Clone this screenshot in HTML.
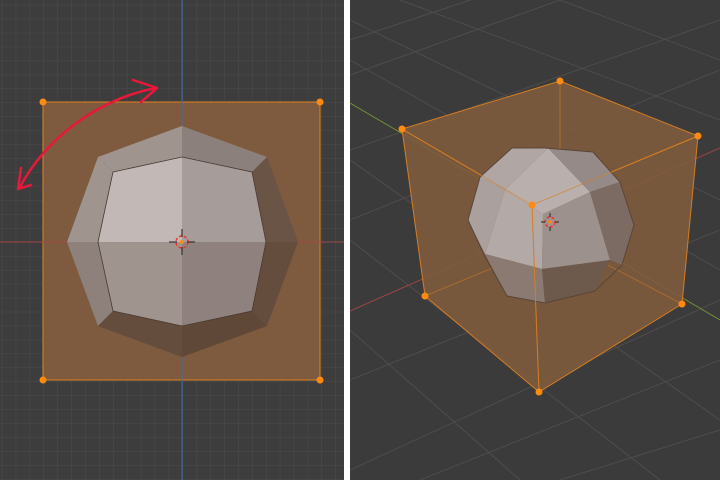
<!DOCTYPE html>
<html><head><meta charset="utf-8"><style>html,body{margin:0;padding:0;background:#fff;width:720px;height:480px;overflow:hidden}</style></head>
<body>
<svg width="720" height="480" viewBox="0 0 720 480" xmlns="http://www.w3.org/2000/svg">
<defs>
<pattern id="g1" width="13.9" height="13.95" patternUnits="userSpaceOnUse" x="43.5" y="102.5">
<path d="M0 0V13.95M0 0H13.9" stroke="#4b4b4b" stroke-width="1" fill="none"/>
</pattern>
<clipPath id="cl"><rect x="0" y="0" width="344" height="480"/></clipPath>
<clipPath id="cr"><rect x="350" y="0" width="370" height="480"/></clipPath>
</defs>
<!-- LEFT PANEL -->
<g clip-path="url(#cl)">
<rect x="0" y="0" width="344" height="480" fill="#3d3d3d"/>
<rect x="0" y="0" width="344" height="480" fill="url(#g1)"/>
<rect x="43" y="102" width="277" height="278" fill="#7e5b3e" stroke="#e0821e" stroke-width="1"/>
<line x1="182" y1="0" x2="182" y2="480" stroke="#3d6bb0" stroke-width="1"/>
<line x1="0" y1="242" x2="344" y2="242" stroke="#a04848" stroke-width="1"/>
<polygon points="182,126 182,157 113,172 98,157" fill="#a0948f"/>
<polygon points="182,126 267,157 252,172 182,157" fill="#8c807c"/>
<polygon points="98,157 113,172 98,242 67,242" fill="#a0948f"/>
<polygon points="67,242 98,242 113,311 98,326" fill="#8e807b"/>
<polygon points="267,157 298,242 266,242 252,172" fill="#6a5446"/>
<polygon points="298,242 267,326 252,311 266,242" fill="#654d3e"/>
<polygon points="98,326 113,311 182,326 182,357" fill="#654d3d"/>
<polygon points="182,357 182,326 252,311 267,326" fill="#5f4838"/>
<polygon points="182,157 182,242 98,242 113,172" fill="#c2b8b5"/>
<polygon points="182,157 252,172 266,242 182,242" fill="#a69c99"/>
<polygon points="98,242 182,242 182,326 113,311" fill="#a0948f"/>
<polygon points="182,242 266,242 252,311 182,326" fill="#8f827e"/>
<polygon points="182,157 252,172 266,242 252,311 182,326 113,311 98,242 113,172" fill="none" stroke="#4a3a30" stroke-width="0.8"/>
<circle cx="43" cy="102" r="3.5" fill="#ff8a10"/><circle cx="320" cy="102" r="3.5" fill="#ff8a10"/>
<circle cx="43" cy="380" r="3.5" fill="#ff8a10"/><circle cx="320" cy="380" r="3.5" fill="#ff8a10"/>
<circle cx="182" cy="242" r="6" fill="none" stroke="#e33" stroke-width="1.5" stroke-dasharray="3 2"/>
<path d="M169 242h8M187 242h8M182 229v8M182 247v8" stroke="#222" stroke-width="1"/>
<circle cx="182" cy="242" r="2" fill="#ff8a10"/>
<path d="M20 187 C45 140 95 100 156 88" stroke="#e8183a" stroke-width="2.5" fill="none" stroke-linecap="round"/>
<path d="M133 80 L157 88 L141 102" stroke="#e8183a" stroke-width="2.5" fill="none" stroke-linecap="round" stroke-linejoin="round"/>
<path d="M21 168 L18 189 L31 185" stroke="#e8183a" stroke-width="2.5" fill="none" stroke-linecap="round" stroke-linejoin="round"/>
</g>
<!-- RIGHT PANEL -->
<g clip-path="url(#cr)">
<rect x="350" y="0" width="370" height="480" fill="#3b3b3b"/>
<g stroke="#4d4d4d" stroke-width="1" fill="none">
<path d="M350 40L470 0M350 75L560 0M350 150L720 20M350 220L720 70M350 380L720 230M350 470L720 300M420 480L720 360M560 480L720 430"/>
<path d="M400 0L720 120M350 20L720 200M350 60L720 270M350 160L720 420M350 240L660 480M350 330L520 480M560 0L720 60"/>
</g>
<line x1="350" y1="311" x2="720" y2="148" stroke="#9a4545" stroke-width="1"/>
<line x1="350" y1="103" x2="720" y2="320" stroke="#6f8f3a" stroke-width="1"/>
<polygon points="402,129 560,81 698,136 682,304 539,392 425,296" fill="#7e5b3e" fill-opacity="0.92"/>
<g stroke="#d57d22" stroke-width="1" fill="none">
<path d="M402,129 L560,81 L698,136 L532,205 Z"/>
<path d="M402,129 L425,296 L539,392 L682,304 L698,136"/>
<path d="M560,81 L560,160 M425,296 L560,240 L682,304" stroke-opacity="0.5"/>
</g>
<polygon points="480,177 512,148 548,148 505,190" fill="#b0a6a3"/>
<polygon points="548,148 590,192 543,214 505,190" fill="#b9b0ad"/>
<polygon points="548,148 593,152 620,182 590,192" fill="#958a87"/>
<polygon points="480,177 505,190 485,254 468,220" fill="#aaa09d"/>
<polygon points="505,190 543,214 542,269 485,254" fill="#b3a9a6"/>
<polygon points="543,214 590,192 610,260 542,269" fill="#9d918d"/>
<polygon points="590,192 620,182 634,225 622,265 610,260" fill="#7c6b62"/>
<polygon points="485,254 542,269 545,303 507,296" fill="#8a7a72"/>
<polygon points="542,269 610,260 595,291 545,303" fill="#6e5a4d"/>
<polygon points="512,148 545,148 593,152 620,182 634,225 622,265 595,291 545,303 507,296 484,255 468,220 480,177" fill="none" stroke="#5a4538" stroke-width="1"/>
<path d="M532,205 L698,136 M532,205 L402,129" stroke="#d57d22" stroke-width="1" stroke-opacity="0.6"/>
<path d="M532,205 L539,392" stroke="#d57d22" stroke-width="1"/>
<circle cx="550" cy="222" r="5" fill="none" stroke="#e33" stroke-width="1.5" stroke-dasharray="3 2"/>
<path d="M541 222h4M555 222h4M550 213v4M550 227v4" stroke="#222" stroke-width="1"/>
<circle cx="550" cy="222" r="1.8" fill="#ff8a10"/>
<g fill="#ff8a10">
<circle cx="560" cy="81" r="3.5"/><circle cx="402" cy="129" r="3.5"/><circle cx="698" cy="136" r="3.5"/>
<circle cx="425" cy="296" r="3.5"/><circle cx="682" cy="304" r="3.5"/><circle cx="539" cy="392" r="3.5"/>
<circle cx="532" cy="205" r="3.5"/>
</g>
</g>
</svg>
</body></html>
